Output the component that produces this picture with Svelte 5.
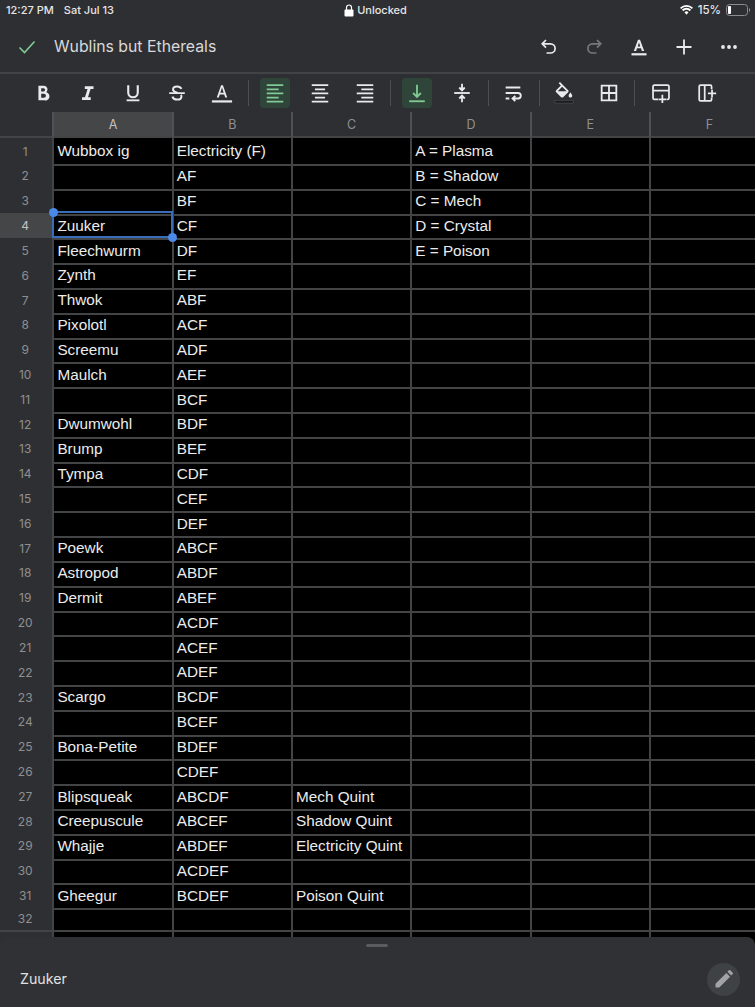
<script>
  const cols = ['A', 'B', 'C', 'D', 'E', 'F'];
  const data = [
    ['Wubbox ig', 'Electricity (F)', '', 'A = Plasma'],
    ['', 'AF', '', 'B = Shadow'],
    ['', 'BF', '', 'C = Mech'],
    ['Zuuker', 'CF', '', 'D = Crystal'],
    ['Fleechwurm', 'DF', '', 'E = Poison'],
    ['Zynth', 'EF'],
    ['Thwok', 'ABF'],
    ['Pixolotl', 'ACF'],
    ['Screemu', 'ADF'],
    ['Maulch', 'AEF'],
    ['', 'BCF'],
    ['Dwumwohl', 'BDF'],
    ['Brump', 'BEF'],
    ['Tympa', 'CDF'],
    ['', 'CEF'],
    ['', 'DEF'],
    ['Poewk', 'ABCF'],
    ['Astropod', 'ABDF'],
    ['Dermit', 'ABEF'],
    ['', 'ACDF'],
    ['', 'ACEF'],
    ['', 'ADEF'],
    ['Scargo', 'BCDF'],
    ['', 'BCEF'],
    ['Bona-Petite', 'BDEF'],
    ['', 'CDEF'],
    ['Blipsqueak', 'ABCDF', 'Mech Quint'],
    ['Creepuscule', 'ABCEF', 'Shadow Quint'],
    ['Whajje', 'ABDEF', 'Electricity Quint'],
    ['', 'ACDEF'],
    ['Gheegur', 'BCDEF', 'Poison Quint'],
    [],
    []
  ];
</script>

<div class="screen">
  <header class="top">
    <div class="status">
      <div class="status-left"><span>12:27 PM</span><span>Sat Jul 13</span></div>
      <div class="status-center">
        <svg width="10" height="13" viewBox="0 0 10 13"><rect x="0.500" y="5.500" width="9" height="7" rx="1" fill="#fff"/><path d="M2.500 6V3.500a2.500 2.500 0 0 1 5 0V6" fill="none" stroke="#fff" stroke-width="1.200"/></svg>
        <span>Unlocked</span>
      </div>
      <div class="status-right">
        <svg width="13" height="10" viewBox="0 0 14 10"><path d="M7 10 4.800 7.500a3.200 3.200 0 0 1 4.400 0ZM3.600 6.300 2.100 4.700a7 7 0 0 1 9.800 0l-1.500 1.600a5 5 0 0 0-6.800 0ZM1.300 3.900 0 2.500a10 10 0 0 1 14 0l-1.300 1.400a8.200 8.200 0 0 0-11.400 0Z" fill="#fff"/></svg>
        <span>15%</span>
        <svg width="24" height="12" viewBox="0 0 24 12"><rect x="0.500" y="0.500" width="21" height="11" rx="3" fill="none" stroke="#8b8c8e"/><rect x="2" y="2" width="3" height="8" rx="1" fill="#fff"/><path d="M23 4v4a2 2 0 0 0 1-2 2 2 0 0 0-1-2Z" fill="#8b8c8e"/></svg>
      </div>
    </div>
    <div class="appbar">
      <svg class="check" width="20" height="20" viewBox="0 0 20 20"><path d="M2.500 10.500 7.500 15.500 17.500 4.500" fill="none" stroke="#81c995" stroke-width="1.600"/></svg>
      <h1>Wublins but Ethereals</h1>
      <div class="actions">
        <svg width="20" height="20" viewBox="0 0 20 20"><path d="M7 3 3.200 6.800 7 10.600M3.500 6.800h8a4.600 4.600 0 0 1 0 9.200H7.500" fill="none" stroke="#e8eaed" stroke-width="1.700"/></svg>
        <svg width="20" height="20" viewBox="0 0 20 20"><path d="M13 3 16.800 6.800 13 10.600M16.500 6.800h-8a4.600 4.600 0 0 0 0 9.200h4" fill="none" stroke="#77787a" stroke-width="1.700"/></svg>
        <svg width="20" height="20" viewBox="0 0 20 20"><path d="M4.800 14 9 2.800h2L15.200 14h-2.300l-.9-2.700H8L7.100 14ZM8.700 9.500h2.600L10 5.500Z" fill="#e8eaed"/><rect x="2.500" y="16.200" width="15" height="2.200" fill="#e8eaed"/></svg>
        <svg width="20" height="20" viewBox="0 0 20 20"><path d="M10 2.500v15M2.500 10h15" stroke="#e8eaed" stroke-width="1.800"/></svg>
        <svg width="20" height="20" viewBox="0 0 20 20"><circle cx="4" cy="10" r="1.900" fill="#e8eaed"/><circle cx="10" cy="10" r="1.900" fill="#e8eaed"/><circle cx="16" cy="10" r="1.900" fill="#e8eaed"/></svg>
      </div>
    </div>
  </header>

  <nav class="toolbar">
    <span class="tool"><svg viewBox="0 0 24 24"><path d="M7 4h5.700a4.200 4.200 0 0 1 3 7.200 4.400 4.400 0 0 1-2.400 8.800H7Zm3 2.700v3.600h2.500a1.800 1.800 0 0 0 0-3.600Zm0 6.200v4.400h3a2.200 2.200 0 0 0 0-4.400Z" fill="#e8eaed"/></svg></span>
    <span class="tool"><svg viewBox="0 0 24 24"><path d="M8.500 4.500h9.500v3h-3.200l-2.800 9h3v3H5.500v-3h3.200l2.800-9h-3Z" fill="#e8eaed"/></svg></span>
    <span class="tool"><svg viewBox="0 0 24 24"><path d="M6.800 3.500v8a5.200 5.200 0 0 0 10.400 0v-8" fill="none" stroke="#e8eaed" stroke-width="2.300"/><rect x="5" y="19" width="14" height="2" fill="#e8eaed"/></svg></span>
    <span class="tool"><svg viewBox="0 0 24 24"><path d="M16.800 7.600C16 5.600 14.300 5 12 5 9.500 5 7.700 6.200 7.700 8.100c0 2.900 4 3.400 5.300 3.900M7 16c.7 2.200 2.800 3.200 5.100 3.200 2.600 0 4.700-1.200 4.700-3.500 0-.7-.2-1.300-.5-1.700" fill="none" stroke="#e8eaed" stroke-width="2.200"/><rect x="3.500" y="11.200" width="17" height="1.900" fill="#e8eaed"/></svg></span>
    <span class="tool"><svg viewBox="0 0 24 24"><path d="M6.300 17 11 3.500h2L17.700 17h-2.200l-1.100-3.300H9.600L8.500 17Zm3.900-5.200h3.600L12 6Z" fill="#e8eaed"/><rect x="1" y="20" width="22" height="2.400" fill="#e8eaed"/></svg></span>
    <i class="sep"></i>
    <span class="tool on"><svg viewBox="0 0 24 24"><path d="M3 3.500h18M3 8h13M3 12.500h18M3 17h13M3 21.500h18" stroke="#81c995" stroke-width="1.900"/></svg></span>
    <span class="tool"><svg viewBox="0 0 24 24"><path d="M3 3.500h18M6.500 8h11M3 12.500h18M6.500 17h11M3 21.500h18" stroke="#e8eaed" stroke-width="1.900"/></svg></span>
    <span class="tool"><svg viewBox="0 0 24 24"><path d="M3 3.500h18M8 8h13M3 12.500h18M8 17h13M3 21.500h18" stroke="#e8eaed" stroke-width="1.900"/></svg></span>
    <i class="sep"></i>
    <span class="tool on"><svg viewBox="0 0 24 24"><path d="M12 3v13M7.800 12 12 16.300 16.200 12" fill="none" stroke="#81c995" stroke-width="2"/><rect x="3.500" y="20" width="17" height="2" fill="#81c995"/></svg></span>
    <span class="tool"><svg viewBox="0 0 24 24"><path d="M12 2v6.500M9 6l3 3.200L15 6M12 22v-6.500M9 18l3-3.200 3 3.200" fill="none" stroke="#e8eaed" stroke-width="2"/><rect x="3.500" y="11" width="17" height="2" fill="#e8eaed"/></svg></span>
    <i class="sep tight"></i>
    <span class="tool"><svg viewBox="0 0 24 24"><path d="M4 6h16M4 12h13.500a3 3 0 0 1 0 6H12M14.500 15.200 11.500 18l3 2.800M4 18h4" fill="none" stroke="#e8eaed" stroke-width="2"/></svg></span>
    <i class="sep tight"></i>
    <span class="tool"><svg viewBox="0 0 24 24"><path d="M16.560 8.940 7.620 0 6.210 1.410l2.380 2.380-5.150 5.150c-.59.590-.59 1.540 0 2.120l5.500 5.500c.29.290.68.440 1.060.440s.77-.150 1.060-.440l5.500-5.500c.59-.580.59-1.530 0-2.120ZM5.210 10 10 5.210 14.790 10ZM19 11.500s-2 2.170-2 3.500c0 1.100.9 2 2 2s2-.9 2-2c0-1.330-2-3.500-2-3.500Z" fill="#e8eaed"/><rect x="2" y="20" width="20" height="3" fill="#1c1c1e" stroke="#55565a" stroke-width=".6"/></svg></span>
    <span class="tool"><svg viewBox="0 0 24 24"><path d="M4 4h16v16H4ZM12 4v16M4 12h16" fill="none" stroke="#e8eaed" stroke-width="2"/></svg></span>
    <i class="sep"></i>
    <span class="tool"><svg viewBox="0 0 24 24"><path d="M9 19H4.800a1.500 1.500 0 0 1-1.500-1.500V5a1.500 1.500 0 0 1 1.500-1.500h14.400A1.500 1.500 0 0 1 20.700 5v12.500a1.500 1.500 0 0 1-1.500 1.500H18M3.300 9.500h17.400M13.500 14v9M9.500 19h8" fill="none" stroke="#e8eaed" stroke-width="1.900"/></svg></span>
    <span class="tool last"><svg viewBox="0 0 24 24"><path d="M17 8V4.800a1.500 1.500 0 0 0-1.500-1.500H5a1.500 1.500 0 0 0-1.500 1.500v14.400A1.500 1.500 0 0 0 5 20.700h10.500a1.500 1.500 0 0 0 1.500-1.500V17M9.500 3.300v17.400M13 12.500h9M17.500 8.500v8" fill="none" stroke="#e8eaed" stroke-width="1.900"/></svg></span>
  </nav>

  <main class="sheet">
    <div class="head">
      <div class="corner"></div>
      {#each cols as c}
        <div class="colhead" class:active={c === 'A'}>{c}</div>
      {/each}
    </div>
    {#each data as row, r}
      <div class="row">
        <div class="rownum" class:active={r === 3}>{r < 32 ? r + 1 : ''}</div>
        {#each cols as c, i}
          <div class="cell" class:hascursor={r === 3 && i === 0}>
            {row[i] || ''}
            {#if r === 3 && i === 0}
              <span class="sel"><b class="dot tl"></b><b class="dot br"></b></span>
            {/if}
          </div>
        {/each}
      </div>
    {/each}
  </main>

  <footer class="panel">
    <span class="grip"></span>
    <span class="value">Zuuker</span>
    <span class="pen"><svg width="20" height="20" viewBox="0 0 20 20"><path d="M1.500 18.500v-3.800L12.300 3.900l3.800 3.800L5.300 18.500ZM13.400 2.800l1.500-1.500a1 1 0 0 1 1.400 0l2.400 2.400a1 1 0 0 1 0 1.400l-1.500 1.500Z" fill="#a2a3a5"/></svg></span>
  </footer>
</div>

<style>
  :global(body) { margin: 0; background: #000; }
  .screen {
    width: 755px;
    height: 1007px;
    display: flex;
    flex-direction: column;
    overflow: hidden;
    font-family: "Liberation Sans", sans-serif;
    position: relative;
  }
  .top {
    height: 72px;
    flex: none;
    background: #2e2f32;
    display: flex;
    flex-direction: column;
    border-bottom: 2px solid #424346;
  }
  .status {
    height: 19px;
    padding: 1px 5px 0 6px;
    box-sizing: border-box;
    display: grid;
    grid-template-columns: 1fr auto 1fr;
    align-items: center;
    color: #e6e6e7;
    font: 500 11px Inter, sans-serif;
  }
  .status-left { display: flex; gap: 10px; }
  .status-center { display: flex; align-items: center; gap: 3px; margin-left: -5px; }
  .status-right { display: flex; justify-content: flex-end; align-items: center; gap: 5px; font-size: 11.500px; }
  .appbar {
    flex: 1;
    display: flex;
    align-items: center;
    padding: 2px 16px 0 17px;
  }
  .check { flex: none; }
  h1 {
    margin: 0 0 0 17px;
    font: 400 15.800px Inter, sans-serif;
    color: #d9d9da;
    flex: 1;
  }
  .actions { display: flex; gap: 25px; align-items: center; }
  .toolbar {
    height: 38px;
    flex: none;
    background: #2e2f32;
    display: flex;
    align-items: center;
    padding-left: 28px;
    box-sizing: border-box;
  }
  .tool {
    width: 30px;
    height: 30px;
    margin-right: 14.800px;
    border-radius: 4px;
    display: flex;
    align-items: center;
    justify-content: center;
    flex: none;
  }
  .tool.last { margin-left: 1px; }
  .tool svg { width: 22px; height: 22px; }
  .tool.on { background: #2f4539; }
  .sep {
    width: 1px;
    height: 26px;
    background: #4e4f52;
    margin: 0 11px 0 -4px;
    flex: none;
  }
  .sep.tight { margin-right: 9px; }
  .sheet { flex: 1; overflow: hidden; background: #000; min-height: 0; }
  .head {
    height: 26.400px;
    display: grid;
    grid-template-columns: 52.400px repeat(6, 119.300px);
    background: #2e2f32;
    color: #8e8f91;
    font: 400 12.500px Inter, sans-serif;
  }
  .corner { border-bottom: 2px solid #434446; }
  .colhead {
    display: flex;
    align-items: center;
    justify-content: center;
    border-left: 2px solid #505154;
    border-bottom: 2px solid #434446;
  }
  .colhead.active { background: #454647; color: #c2c2c3; }
  .row {
    height: 24.820px;
    display: grid;
    grid-template-columns: 52.400px repeat(6, 119.300px);
    box-sizing: border-box;
  }
  .rownum {
    background: #2e2f32;
    color: #8e8f91;
    font: 400 12px Inter, sans-serif;
    display: flex;
    align-items: center;
    justify-content: center;
    padding-right: 2px;
    border-bottom: 2px solid #434446;
    box-sizing: border-box;
  }
  .rownum.active { background: #454647; color: #c2c2c3; }
  .cell {
    position: relative;
    color: #ececec;
    font-size: 15.300px;
    line-height: 25.500px;
    padding-left: 3px;
    border-left: 2px solid #434446;
    border-bottom: 2px solid #434446;
    box-sizing: border-box;
    white-space: nowrap;
  }
  .hascursor { z-index: 2; }
  .sel {
    position: absolute;
    left: -2px;
    top: -2px;
    width: 121px;
    height: 27px;
    border: 2px solid #3a6db8;
    box-sizing: border-box;
  }
  .dot {
    position: absolute;
    width: 9px;
    height: 9px;
    border-radius: 50%;
    background: #4a89e8;
  }
  .tl { left: -5px; top: -5px; }
  .br { right: -6px; bottom: -6px; }
  .panel {
    height: 70px;
    flex: none;
    background: #303134;
    border-radius: 8px 8px 0 0;
    display: flex;
    align-items: center;
    justify-content: space-between;
    padding: 0 15px 0 20px;
    position: relative;
    z-index: 3;
    margin-top: -8px;
    box-sizing: border-box;
  }
  .grip {
    position: absolute;
    left: 366px;
    top: 7px;
    width: 22px;
    height: 3px;
    border-radius: 2px;
    background: #5b5c5f;
  }
  .value { color: #e2e2e3; font: 400 14.200px Inter, sans-serif; margin-top: 13px; }
  .pen {
    width: 33px;
    height: 33px;
    border-radius: 50%;
    background: #3f4244;
    display: flex;
    align-items: center;
    justify-content: center;
    margin-top: 14px;
  }
</style>
